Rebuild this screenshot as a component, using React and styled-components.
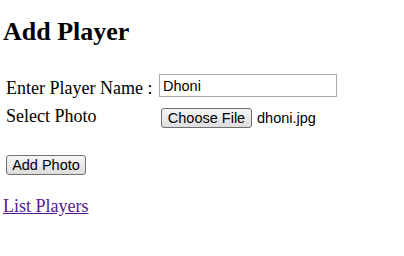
import { createGlobalStyle, styled } from "styled-components"

const GlobalStyle = createGlobalStyle`
  html, body {
    margin: 0;
    background: #ffffff;
  }
  body {
    font-family: "Liberation Serif", "Times New Roman", serif;
    color: #000000;
  }
`

const Page = styled.div`
  padding: 3px;
`

const Title = styled.h1`
  margin: 14px 0 0;
  font-size: 26px;
  line-height: 30px;
  font-weight: bold;
`

const Form = styled.form`
  margin-top: 27px;
  padding-left: 3px;
  display: flex;
  flex-direction: column;
`

const Row = styled.div`
  display: grid;
  grid-template-columns: 153px auto;
  align-items: start;
  margin-top: ${(props) => props.$gap || 0}px;
`

const Label = styled.label`
  font-size: 18px;
  line-height: 20px;
  margin-top: ${(props) => props.$top || 0}px;
  white-space: nowrap;
`

const TextInput = styled.input`
  box-sizing: border-box;
  width: 178px;
  height: 23px;
  margin: 0;
  padding: 1px 3px 0;
  border: 1px solid #a9a9a9;
  font-family: "Liberation Sans", Arial, sans-serif;
  font-size: 14.5px;
  color: #000000;
  outline: none;
`

const FileField = styled.div`
  display: flex;
  align-items: center;
  gap: 5px;
  margin: 2px 0 0 2px;
  font-family: "Liberation Sans", Arial, sans-serif;
  font-size: 14.5px;
`

const Button = styled.button`
  box-sizing: border-box;
  height: 20px;
  width: ${(props) => props.$width}px;
  margin: 0;
  padding: 0;
  border: 1px solid #707070;
  border-radius: 3px;
  background: linear-gradient(#f6f6f6, #dddddd);
  font-family: "Liberation Sans", Arial, sans-serif;
  font-size: 14.5px;
  line-height: 18px;
  color: #000000;
`

const SubmitRow = styled.div`
  margin-top: 27px;
`

const PlayersLink = styled.a`
  display: inline-block;
  margin-top: 21px;
  font-size: 18px;
  line-height: 20px;
  color: #551a8b;
  text-decoration: underline;
`

export default function App() {
  return (
    <Page>
      <GlobalStyle />
      <Title>Add Player</Title>
      <Form onSubmit={(e) => e.preventDefault()}>
        <Row>
          <Label $top={4}>Enter Player Name :</Label>
          <TextInput type="text" defaultValue="Dhoni" />
        </Row>
        <Row $gap={8}>
          <Label>Select Photo</Label>
          <FileField>
            <Button type="button" $width={91}>Choose File</Button>
            <span>dhoni.jpg</span>
          </FileField>
        </Row>
        <SubmitRow>
          <Button type="submit" $width={80}>Add Photo</Button>
        </SubmitRow>
      </Form>
      <PlayersLink href="#">List Players</PlayersLink>
    </Page>
  )
}
